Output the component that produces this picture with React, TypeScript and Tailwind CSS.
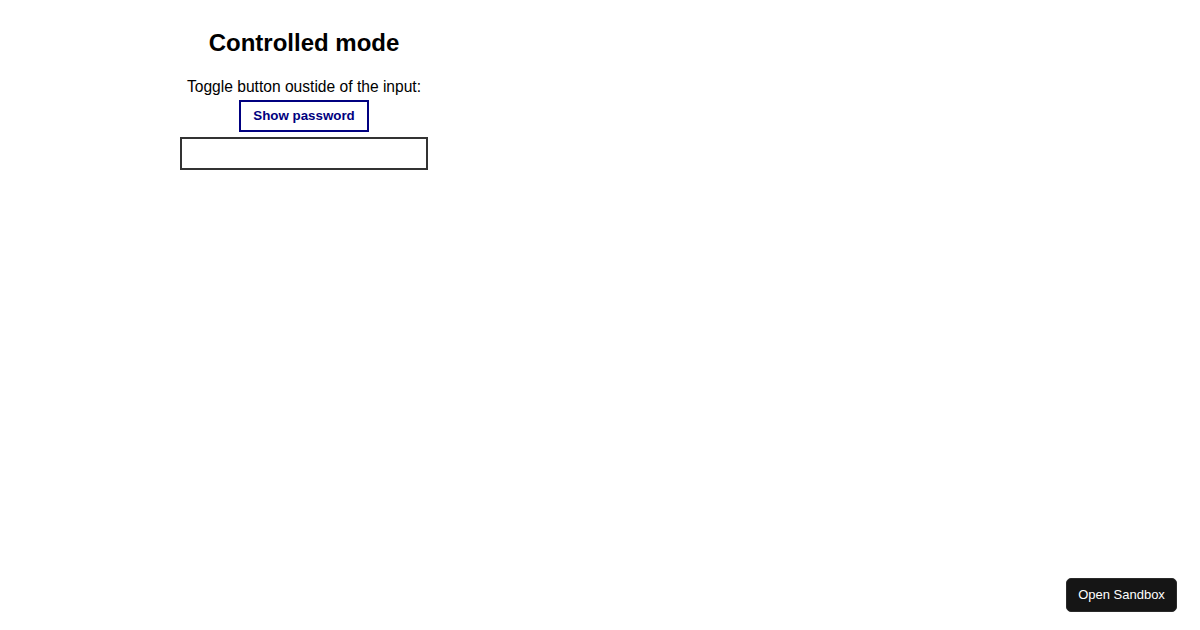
import React from "react";

export default function App() {
  return (
    <div className="relative w-[1200px] h-[630px] bg-white" style={{ fontFamily: '"Liberation Sans", Arial, sans-serif' }}>
      <div className="ml-[180px] w-[248px] pt-[29px] flex flex-col items-center text-black">
        <h2 className="text-[24px] leading-[28px] font-bold whitespace-nowrap">Controlled mode</h2>
        <p className="mt-[21px] text-[15.6px] leading-[18px] whitespace-nowrap">Toggle button oustide of the input:</p>
        <button className="mt-[4px] w-[130px] h-[32px] border-2 border-[#000080] text-[#000080] font-bold text-[13.333px] leading-[16px] bg-white">
          Show password
        </button>
        <input type="password" className="mt-[5px] w-[248px] h-[33px] border-2 border-[#333333] bg-white outline-none" />
      </div>
      <button className="absolute left-[1066px] top-[578px] w-[111px] h-[34px] rounded-[5px] bg-[#151515] text-white text-[13px] leading-[16px] border border-[#2a2a2a]">
        Open Sandbox
      </button>
    </div>
  );
}
